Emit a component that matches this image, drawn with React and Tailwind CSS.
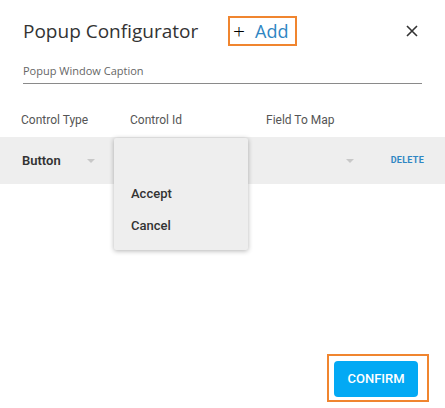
import React from "react";

const Caret = ({ className }) => (
  <svg width="8" height="4" viewBox="0 0 8 4" className={className}>
    <path d="M0 0 L8 0 L4 4 Z" fill="#c8c8c8" />
  </svg>
);

const PopupConfigurator = () => {
  const items = ["", "Accept", "Cancel"];

  return (
    <div className="h-[408px] w-[445px] bg-white flex flex-col font-['Roboto',sans-serif] relative overflow-hidden">
      {/* header */}
      <div className="flex items-center h-[46px] pt-[16px] px-[23px]">
        <div className="text-[19px] text-[#333] font-['Open_Sans',sans-serif] leading-none w-[205px]">
          Popup Configurator
        </div>
        <div className="flex items-center h-[30px] w-[69px] border-2 border-[#f0852f] font-['Open_Sans',sans-serif]">
          <span className="text-[21px] font-light text-black ml-[3px] leading-none">+</span>
          <span className="text-[18px] text-[#2f86c3] ml-[10px] leading-none">Add</span>
        </div>
        <div className="ml-auto mr-[4px]">
          <svg width="12" height="12" viewBox="0 0 12 12">
            <path d="M1 1 L11 11 M11 1 L1 11" stroke="#333" strokeWidth="1.6" />
          </svg>
        </div>
      </div>

      {/* caption input */}
      <div className="mx-[23px] mt-[12px] border-b border-[#8a8a8a] pb-[1px]">
        <span className="text-[11px] text-[#666] font-['Open_Sans',sans-serif]">
          Popup Window Caption
        </span>
      </div>

      {/* table header */}
      <div className="flex items-center text-[12px] text-[#555] mt-[27px] h-[17px]">
        <div className="w-[130px] pl-[21px]">Control Type</div>
        <div className="w-[136px]">Control Id</div>
        <div>Field To Map</div>
      </div>

      {/* row */}
      <div className="flex items-center bg-[#eeeeee] h-[47px] mt-[9px] relative">
        <div className="pl-[22px] text-[13px] font-semibold text-[#333] w-[87px]">Button</div>
        <Caret />
        <Caret className="ml-[251px]" />
        <div className="ml-auto mr-[21px] text-[9px] font-bold text-[#2f86c3] tracking-[0.3px]">
          DELETE
        </div>

        {/* dropdown menu */}
        <div className="absolute left-[114px] top-[1px] w-[134px] bg-[#eeeeee] rounded-[2px] shadow-[0_1px_5px_rgba(0,0,0,0.3)] py-[8px]">
          {items.map((item, i) => (
            <div key={i} className="h-[32px] flex items-center pl-[17px] text-[13px] font-medium text-[#333]">
              {item}
            </div>
          ))}
        </div>
      </div>

      {/* footer */}
      <div className="mt-auto flex justify-end pr-[16px] pb-[6px]">
        <div className="border-2 border-[#f0852f] w-[102px] h-[48px] pl-[5px] pt-[5px]">
          <button className="bg-[#03a9f4] text-white text-[13px] font-medium rounded-[4px] w-[84px] h-[36px]">
            CONFIRM
          </button>
        </div>
      </div>
    </div>
  );
};

export default PopupConfigurator;
